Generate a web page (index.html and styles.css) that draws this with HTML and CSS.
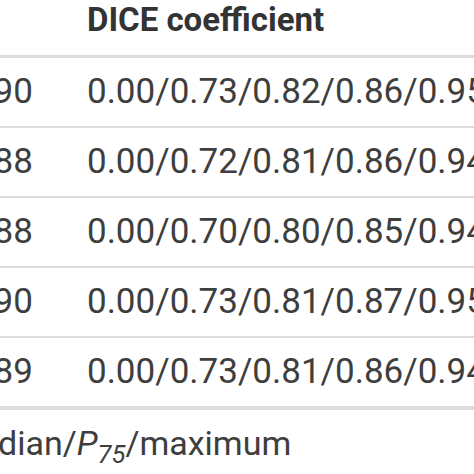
FILE: index.html
```html
<!DOCTYPE html>
<html lang="en">
<head>
    <meta charset="UTF-8">
    <meta name="viewport" content="width=device-width, initial-scale=1.0">
    <title>Segmentation results</title>
    <link rel="stylesheet" href="styles.css">
</head>
<body>
    <div class="sheet">
        <table class="results">
            <thead>
                <tr>
                    <th class="first">Jaccard index</th>
                    <th>DICE coefficient</th>
                </tr>
            </thead>
            <tbody>
                <tr>
                    <td class="first">0.00/0.57/0.70/0.76/0.90</td>
                    <td>0.00/0.73/0.82/0.86/0.95</td>
                </tr>
                <tr>
                    <td class="first">0.00/0.56/0.68/0.75/0.88</td>
                    <td>0.00/0.72/0.81/0.86/0.94</td>
                </tr>
                <tr>
                    <td class="first">0.00/0.54/0.67/0.74/0.88</td>
                    <td>0.00/0.70/0.80/0.85/0.94</td>
                </tr>
                <tr>
                    <td class="first">0.00/0.57/0.69/0.77/0.90</td>
                    <td>0.00/0.73/0.81/0.87/0.95</td>
                </tr>
                <tr>
                    <td class="first">0.00/0.57/0.69/0.76/0.89</td>
                    <td>0.00/0.73/0.81/0.86/0.94</td>
                </tr>
            </tbody>
        </table>
        <p class="note">minimum/<i>P</i><sub><i>25</i></sub>/median/<i>P</i><sub><i>75</i></sub>/maximum</p>
    </div>
</body>
</html>
```

FILE: styles.css
```css
body {
    margin: 0;
    background-color: #fff;
    font-family: Roboto, "Liberation Sans", sans-serif;
    color: #3e3e3e;
    overflow: hidden;
}
.sheet {
    width: 474px;
    height: 474px;
    overflow: hidden;
}
.results {
    border-collapse: collapse;
    margin-left: -366px;
    white-space: nowrap;
    font-size: 35px;
    line-height: 40px;
}
.results th {
    text-align: left;
    font-size: 33px;
    font-weight: bold;
    color: #333;
    padding: 0 0 15px 0;
    border-bottom: 3px solid #dcdcdc;
}
.results td {
    padding: 14px 0;
    border-bottom: 2px solid #dcdcdc;
}
.results .first {
    padding-right: 54px;
}
.results tbody tr:last-child td {
    border-bottom: 4px solid #dcdcdc;
}
.note {
    margin: 13px 0 0 -270px;
    white-space: nowrap;
    font-size: 34px;
    line-height: 40px;
}
.note sub {
    font-size: 0.75em;
    line-height: 0;
}
```
